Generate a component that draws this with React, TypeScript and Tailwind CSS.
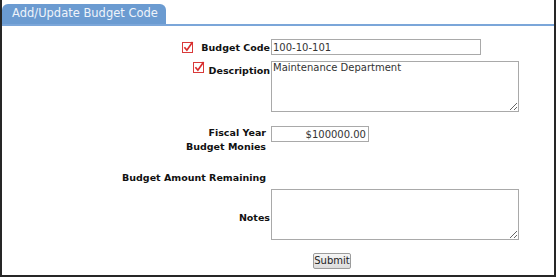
import React from "react";

const LABEL = "font-['DejaVu_Sans',Verdana,sans-serif] text-[9.5px] font-bold leading-[14px] text-[#111]";
const FIELD =
  "border border-[#a9a9a9] bg-white font-['DejaVu_Sans',Verdana,sans-serif] text-[10px] text-[#333] outline-none";

function RequiredMark() {
  return (
    <svg width="12" height="12" viewBox="0 0 12 12" className="shrink-0">
      <rect x="0.5" y="1.5" width="10" height="10" fill="white" stroke="#d93a3a" strokeWidth="1" />
      <path d="M2.4 6.2 L4.9 9.2 L10.6 1" fill="none" stroke="#d92b2b" strokeWidth="1.7" />
    </svg>
  );
}

export default function App() {
  return (
    <div className="flex h-[277px] w-[556px] flex-col border-x-2 border-b-2 border-[#262626] bg-white">
      {/* tab strip */}
      <div className="flex border-b-2 border-[#7ba6d9] pt-[4px]">
        <div className="rounded-t-[6px] bg-[#6b9bd1] pl-[10px] pr-[8px] pt-[2px] pb-[3px] font-['DejaVu_Sans',Verdana,sans-serif] text-[11.5px] leading-[15px] text-[#eef3fa]">
          Add/Update Budget Code
        </div>
      </div>

      <form className="grid grid-cols-[269px_1fr] pt-[13px] leading-none" onSubmit={(e) => e.preventDefault()}>
        {/* Budget Code */}
        <div className="flex justify-end pr-px">
          <span className="mt-[2px] mr-[7px]">
            <RequiredMark />
          </span>
          <span className={`${LABEL} mt-[2px]`}>Budget Code</span>
        </div>
        <div>
          <input
            defaultValue="100-10-101"
            className={`${FIELD} block h-[16px] w-[210px] px-px leading-[14px]`}
          />
        </div>

        {/* Description */}
        <div className="mt-[6px] flex justify-end pr-px">
          <span className="mt-0 mr-[4px]">
            <RequiredMark />
          </span>
          <span className={`${LABEL} mt-[3px]`}>Description</span>
        </div>
        <div className="mt-[6px]">
          <textarea
            defaultValue="Maintenance Department"
            className={`${FIELD} block h-[51px] w-[248px] px-px py-0 leading-[12px]`}
          />
        </div>

        {/* Fiscal Year */}
        <div className="mt-[14px] flex justify-end pr-[5px]">
          <span className={`${LABEL} text-right`}>
            Fiscal Year
            <br />
            Budget Monies
          </span>
        </div>
        <div className="mt-[14px]">
          <input
            defaultValue="$100000.00"
            className={`${FIELD} block h-[16px] w-[98px] pr-[2px] text-right leading-[14px]`}
          />
        </div>

        {/* Budget Amount Remaining */}
        <div className="mt-[17px] flex justify-end pr-[5px]">
          <span className={LABEL}>Budget Amount Remaining</span>
        </div>
        <div className="mt-[17px]" />

        {/* Notes */}
        <div className="mt-[4px] flex justify-end pr-px">
          <span className={`${LABEL} mt-[22px]`}>Notes</span>
        </div>
        <div className="mt-[4px]">
          <textarea className={`${FIELD} block h-[51px] w-[248px] px-px py-0`} />
        </div>

        <div />
        <div className="mt-[13px] pl-[42px]">
          <button
            type="submit"
            className="block h-[16px] w-[38px] rounded-[2px] border border-[#9c9c9c] bg-gradient-to-b from-[#f6f6f6] to-[#dcdcdc] font-['DejaVu_Sans',Verdana,sans-serif] text-[10px] leading-[14px] text-[#222]"
          >
            Submit
          </button>
        </div>
      </form>
    </div>
  );
}
